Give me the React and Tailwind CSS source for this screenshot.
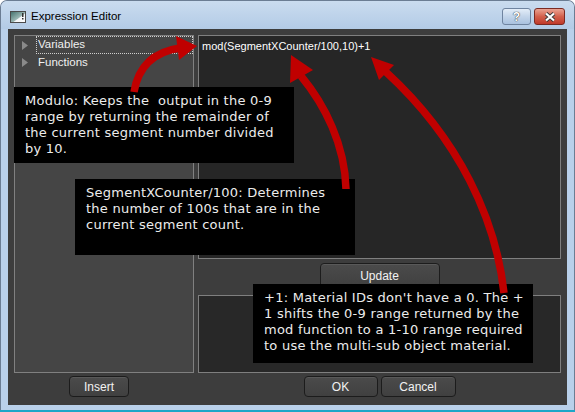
import React from "react";

// small right-pointing tree expander
const Expander = () => (
  <svg width="6" height="9" viewBox="0 0 6 9" className="shrink-0">
    <path d="M0 0 L6 4.5 L0 9 Z" fill="#8a8a8a" />
  </svg>
);

const DarkButton = ({ label, className = "" }) => (
  <button
    className={`shrink-0 rounded-[4px] border border-[#1c1c1c] bg-gradient-to-b from-[#4b4b4b] to-[#404040] text-[12px] leading-none text-[#f2f2f2] shadow-[inset_0_1px_0_#595959] ${className}`}
  >
    {label}
  </button>
);

const Callout = ({ lines, className = "" }) => (
  <div
    className={`absolute w-[280px] bg-black pl-[11px] pt-[6px] font-['DejaVu_Sans',sans-serif] text-[13px] leading-[16px] tracking-[0.25px] text-[#ececec] whitespace-pre ${className}`}
  >
    {lines.map((l, i) => (
      <div key={i}>{l}</div>
    ))}
  </div>
);

export default function App() {
  return (
    <div className="relative w-[575px] h-[412px] overflow-hidden bg-white font-['Liberation_Sans',sans-serif]">
      {/* window frame */}
      <div className="flex h-full flex-col rounded-t-[7px] border-x border-t border-[#6b7d93] bg-[#b9d0ea]">
        {/* title bar */}
        <div className="flex h-[28px] shrink-0 items-center rounded-t-[6px] bg-gradient-to-b from-[#cadcef] to-[#b3cbe6] pl-[9px] pr-[9px] pt-[3px]">
          <svg width="16" height="12" viewBox="0 0 16 12" className="shrink-0">
            <defs>
              <linearGradient id="ico" x1="0" y1="0" x2="1" y2="1">
                <stop offset="0" stopColor="#3f6e6a" />
                <stop offset="0.55" stopColor="#9bb7b4" />
                <stop offset="0.6" stopColor="#f4f6f8" />
                <stop offset="1" stopColor="#ffffff" />
              </linearGradient>
            </defs>
            <rect x="0.5" y="0.5" width="15" height="11" fill="url(#ico)" stroke="#4b4b4b" />
            <rect x="12" y="2" width="1.5" height="4" fill="#333" />
            <rect x="12" y="7" width="1.5" height="1.5" fill="#333" />
          </svg>
          <span className="ml-[5px] text-[11.5px] text-black">Expression Editor</span>
          <div className="ml-auto flex h-[17px] gap-[3px]">
            <div className="flex w-[29px] items-center justify-center rounded-[3px] border border-[#6f84a0] bg-gradient-to-b from-[#e3edf8] via-[#c3d5ea] to-[#a9c2df] text-[12px] font-bold text-white [text-shadow:0_0_1px_#333,0_0_1px_#333]">
              ?
            </div>
            <div className="flex w-[31px] items-center justify-center rounded-[3px] border border-[#7b2a22] bg-gradient-to-b from-[#e9a393] via-[#d3604c] to-[#c0392a]">
              <svg width="12" height="10" viewBox="0 0 12 10">
                <path d="M2 1.5 L10 8.5 M10 1.5 L2 8.5" stroke="#3a3a3a" strokeWidth="4" />
                <path d="M2 1.5 L10 8.5 M10 1.5 L2 8.5" stroke="#ffffff" strokeWidth="2.2" />
              </svg>
            </div>
          </div>
        </div>

        {/* client area */}
        <div className="mx-[7px] flex flex-1 flex-col bg-[#3d3d3d] p-[6px]">
          <div className="flex h-[338px] shrink-0 gap-[4px]">
            {/* tree */}
            <div className="w-[180px] border border-[#808080] bg-[#454545] text-[11.5px] text-[#f0f0f0]">
              <div className="flex h-[18px] items-center pl-[7px]">
                <Expander />
                <div className="ml-[8px] flex h-full flex-1 items-center border border-dotted border-[#cfcfcf] pl-[1px]">
                  Variables
                </div>
              </div>
              <div className="flex h-[17px] items-center pl-[7px]">
                <Expander />
                <div className="ml-[10px]">Functions</div>
              </div>
            </div>

            {/* editor column */}
            <div className="flex w-[363px] flex-col">
              <div className="h-[224px] shrink-0 border border-[#7f7f7f] bg-[#262626] px-[3px] pt-[4px] text-[11px] leading-[13px] text-white">
                mod(SegmentXCounter/100,10)+1
              </div>
              <DarkButton label="Update" className="mt-[4px] h-[25px] w-[120px] self-center" />
              <div className="mt-[7px] flex-1 border border-[#7f7f7f] bg-[#282828]" />
            </div>
          </div>

          {/* bottom buttons */}
          <div className="mt-[3px] flex h-[21px]">
            <DarkButton label="Insert" className="ml-[55px] h-[21px] w-[60px]" />
            <div className="ml-auto flex w-[363px] justify-center gap-[3px]">
              <DarkButton label="OK" className="h-[21px] w-[74px]" />
              <DarkButton label="Cancel" className="h-[21px] w-[75px]" />
            </div>
          </div>
        </div>
        <div className="h-[5px] shrink-0" />
        <div className="-mx-px h-[2px] shrink-0 bg-[#1ba6c8]" />
      </div>

      {/* annotation callouts */}
      <Callout
        className="left-[14px] top-[87px] h-[76px]"
        lines={[
          "Modulo: Keeps the  output in the 0-9",
          "range by returning the remainder of",
          "the current segment number divided",
          "by 10.",
        ]}
      />
      <Callout
        className="left-[75px] top-[179px] h-[76px]"
        lines={[
          "SegmentXCounter/100: Determines",
          "the number of 100s that are in the",
          "current segment count.",
        ]}
      />
      <Callout
        className="left-[253px] top-[284px] h-[79px]"
        lines={[
          "+1: Material IDs don't have a 0. The +",
          "1 shifts the 0-9 range returned by the",
          "mod function to a 1-10 range required",
          "to use the multi-sub object material.",
        ]}
      />

      {/* red arrows */}
      <svg
        className="pointer-events-none absolute inset-0"
        width="575"
        height="412"
        viewBox="0 0 575 412"
      >
        <g fill="none" stroke="#c00000" strokeWidth="7.5">
          <path d="M134 92 C138 68 152 52 180 48" />
          <path d="M346 189 C345 145 325 105 301 76" />
          <path d="M504 293 C496 220 460 140 386 72" />
        </g>
        <g fill="#c00000">
          <polygon points="197,46 176,36 179,60" />
          <polygon points="291,55 313,70 290,83" />
          <polygon points="371,57 394,65 379,80" />
        </g>
      </svg>
    </div>
  );
}
